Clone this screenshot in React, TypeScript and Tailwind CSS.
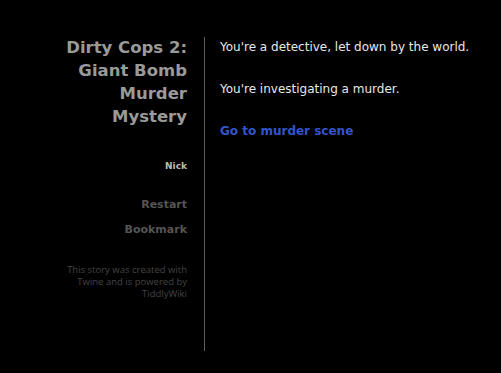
export default function App() {
  return (
    <div className="w-[501px] h-[373px] bg-black overflow-hidden" style={{ fontFamily: '"DejaVu Sans", Verdana, sans-serif' }}>
      <div className="flex pt-[37px]">
        <div className="w-[187px] shrink-0 text-right flex flex-col items-end">
          <div className="text-[16.5px] leading-[23px] font-bold text-[#9a9a9a] w-[140px] mt-[-1px]">
            Dirty Cops 2: Giant Bomb Murder Mystery
          </div>
          <div className="mt-[32px] text-[9px] leading-[12px] font-bold text-[#bbbbbb]">Nick</div>
          <div className="mt-[26px] text-[11px] leading-[14px] font-bold text-[#555555]">Restart</div>
          <div className="mt-[11px] text-[11px] leading-[14px] font-bold text-[#555555]">Bookmark</div>
          <div className="mt-[27px] text-[9.5px] leading-[12px] text-[#444444] w-[130px]" style={{ fontFamily: '"Open Sans", sans-serif' }}>
            This story was created with Twine and is powered by TiddlyWiki
          </div>
        </div>
        <div className="ml-[17px] w-px h-[314px] bg-[#5a5a5a] shrink-0" />
        <div className="pl-[15px] text-[12px] leading-[16px] text-[#e8e8e8]">
          <p className="mt-[2px]">You're a detective, let down by the world.</p>
          <p className="mt-[26px]">You're investigating a murder.</p>
          <p className="mt-[26px] font-bold text-[#3355cc]">Go to murder scene</p>
        </div>
      </div>
    </div>
  );
}
